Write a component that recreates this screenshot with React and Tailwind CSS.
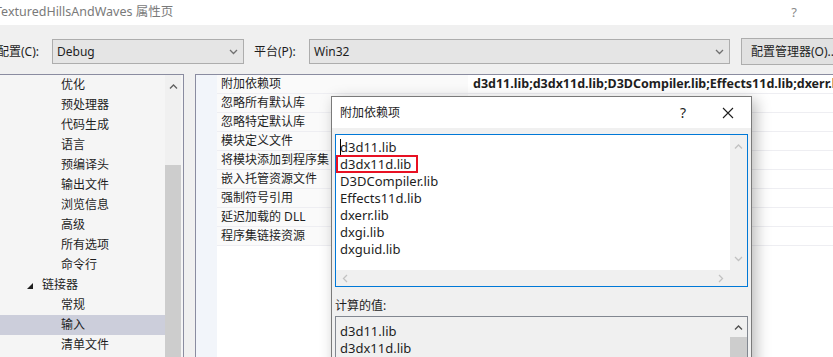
import React from "react";

const cjk = { fontFamily: '"Segoe UI", "Noto Sans", "Noto Sans CJK SC", sans-serif' };

const Chevron = ({ dir = "down", color = "#606060", size = 9 }) => {
  const paths = {
    down: "M1 3 L4.5 6.5 L8 3",
    up: "M1 6.5 L4.5 3 L8 6.5",
    left: "M6 1 L2.5 4.5 L6 8",
    right: "M3 1 L6.5 4.5 L3 8",
  };
  return (
    <svg width={size} height={size} viewBox="0 0 9 9" className="shrink-0">
      <path d={paths[dir]} fill="none" stroke={color} strokeWidth="1.3" />
    </svg>
  );
};

const treeItems = [
  { label: "优化", indent: 61 },
  { label: "预处理器", indent: 61 },
  { label: "代码生成", indent: 61 },
  { label: "语言", indent: 61 },
  { label: "预编译头", indent: 61 },
  { label: "输出文件", indent: 61 },
  { label: "浏览信息", indent: 61 },
  { label: "高级", indent: 61 },
  { label: "所有选项", indent: 61 },
  { label: "命令行", indent: 61 },
  { label: "链接器", indent: 42, expanded: true },
  { label: "常规", indent: 61 },
  { label: "输入", indent: 61, selected: true },
  { label: "清单文件", indent: 61 },
];

const props = [
  "附加依赖项",
  "忽略所有默认库",
  "忽略特定默认库",
  "模块定义文件",
  "将模块添加到程序集",
  "嵌入托管资源文件",
  "强制符号引用",
  "延迟加载的 DLL",
  "程序集链接资源",
];

const libs = ["d3d11.lib", "d3dx11d.lib", "D3DCompiler.lib", "Effects11d.lib", "dxerr.lib", "dxgi.lib", "dxguid.lib"];

function Dropdown({ value, className }) {
  return (
    <div className={"h-[25px] flex items-center justify-between bg-[#e5e5e5] border border-[#adadad] pl-[4px] pr-[5px] " + className}>
      <span>{value}</span>
      <Chevron dir="down" color="#707070" />
    </div>
  );
}

export default function App() {
  return (
    <div className="relative w-[833px] h-[357px] overflow-hidden bg-[#f0f0f0] text-[12px] text-[#1e1e1e]" style={cjk}>
      {/* window title */}
      <div className="h-[25px] bg-white flex items-center justify-between">
        <span className="ml-[-5px] text-[#7a7a7a] text-[12.5px] whitespace-nowrap">TexturedHillsAndWaves 属性页</span>
        <span className="mr-[36px] text-[#8a8a8a] text-[13px]">?</span>
      </div>

      {/* configuration bar */}
      <div className="h-[49px] pt-[14px] flex items-start">
        <div className="h-[25px] flex items-center">
          <span className="ml-[-3px] w-[55px] shrink-0 whitespace-nowrap">配置(C):</span>
          <Dropdown value="Debug" className="w-[192px] shrink-0" />
          <span className="ml-[10px] w-[55px] shrink-0 whitespace-nowrap">平台(P):</span>
          <Dropdown value="Win32" className="w-[421px] shrink-0" />
          <div className="ml-[11px] h-[27px] w-[100px] shrink-0 flex items-center pl-[9px] bg-[#e1e1e1] border border-[#adadad] whitespace-nowrap">
            配置管理器(O)...
          </div>
        </div>
      </div>

      {/* panels */}
      <div className="flex h-[283px]">
        <div className="w-[184px] shrink-0 bg-[#f5f5f5] border-t border-r border-[#8a8ca0] flex">
          <div className="w-[165px] shrink-0">
            {treeItems.map((it) => (
              <div
                key={it.label}
                className={"h-[20px] flex items-center relative " + (it.selected ? "bg-[#cccedb]" : "")}
                style={{ paddingLeft: it.indent }}
              >
                {it.expanded && (
                  <svg width="6" height="6" viewBox="0 0 6 6" className="absolute left-[27px] top-[8px]">
                    <polygon points="6,0 6,6 0,6" fill="#1e1e1e" />
                  </svg>
                )}
                {it.label}
              </div>
            ))}
          </div>
          <div className="w-[16px] shrink-0 bg-[#f0f0f0] flex flex-col">
            <div className="h-[22px] flex items-center justify-center">
              <Chevron dir="up" color="#606060" />
            </div>
            <div className="h-[68px]" />
            <div className="flex-1 bg-[#cdcdcd]" />
          </div>
        </div>
        <div className="w-[11px] shrink-0" />
        <div className="flex-1 min-w-0 bg-white border-t border-l border-[#8a8ca0] flex">
          <div className="w-[21px] shrink-0 bg-[#f2f5fa]" />
          <div className="flex-1 min-w-0">
            {props.map((p, i) => (
              <div key={p} className="h-[19px] flex border-b border-[#eeeef2]">
                <div className="w-[251px] shrink-0 pl-[4px] flex items-center bg-[#fafafa] whitespace-nowrap">{p}</div>
                <div className="flex-1 min-w-0 flex items-center pl-[5px] whitespace-nowrap overflow-hidden font-bold text-[12.5px]">
                  {i === 0 ? "d3d11.lib;d3dx11d.lib;D3DCompiler.lib;Effects11d.lib;dxerr.lib;dxgi.lib" : ""}
                </div>
              </div>
            ))}
          </div>
        </div>
      </div>

      {/* dialog */}
      <div className="absolute left-[331px] top-[96px] w-[421px] h-[280px] bg-[#f0f0f0] border border-[#7a7a7a] shadow-[4px_4px_14px_rgba(0,0,0,0.28)]">
        <div className="h-[31px] bg-white flex items-center justify-between pl-[8px]">
          <span>附加依赖项</span>
          <div className="flex items-center">
            <span className="text-[14px] mr-[36px]">?</span>
            <svg width="12" height="12" viewBox="0 0 12 12" className="mr-[17px]">
              <path d="M1 1 L11 11 M11 1 L1 11" stroke="#1e1e1e" strokeWidth="1.1" />
            </svg>
          </div>
        </div>
        <div className="px-[3px] pt-[6px]">
          <div className="h-[153px] border border-[#0078d7] bg-white flex flex-col">
            <div className="flex flex-1">
              <div className="flex-1 pl-[4px] pt-[4px] text-[13px] leading-[17px]">
                {libs.map((l, i) => (
                  <div key={l} className="relative">
                    {i === 0 && <span className="absolute left-0 top-[0px] w-[1px] h-[16px] bg-black" />}
                    {i === 1 && <span className="absolute left-[-4px] top-[-1px] w-[82px] h-[18px] border-2 border-[#e81123]" />}
                    {l}
                  </div>
                ))}
              </div>
              <div className="w-[17px] bg-[#f0f0f0] flex flex-col justify-between items-center py-[7px]">
                <Chevron dir="up" color="#c2c2c2" />
                <Chevron dir="down" color="#c2c2c2" />
              </div>
            </div>
            <div className="h-[16px] flex bg-[#f0f0f0]">
              <div className="flex-1 flex items-center justify-between px-[5px]">
                <Chevron dir="left" color="#c2c2c2" />
                <Chevron dir="right" color="#c2c2c2" />
              </div>
              <div className="w-[17px]" />
            </div>
          </div>
          <div className="mt-[9px] h-[19px] flex items-center">计算的值:</div>
          <div className="mt-[1px] h-[60px] border border-[#828790] bg-[#f0f0f0] flex">
            <div className="flex-1 pl-[4px] pt-[6px] text-[13px] leading-[17px]">
              <div>d3d11.lib</div>
              <div>d3dx11d.lib</div>
            </div>
            <div className="w-[17px] flex flex-col">
              <div className="h-[20px] flex items-center justify-center">
                <Chevron dir="up" color="#505050" />
              </div>
              <div className="flex-1 bg-[#cdcdcd]" />
            </div>
          </div>
        </div>
      </div>
    </div>
  );
}
